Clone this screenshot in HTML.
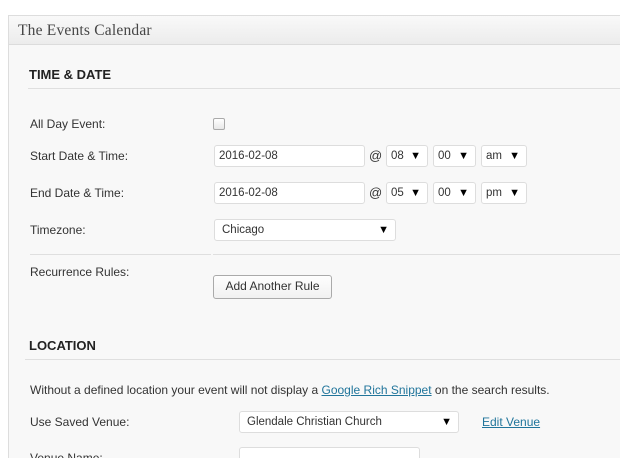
<!DOCTYPE html>
<html><head><style>
*{margin:0;padding:0;box-sizing:border-box}
html,body{width:620px;height:458px;overflow:hidden}
body{background:#fff;position:relative;font-family:"Liberation Sans",Arial,sans-serif;font-size:12px;color:#333}
.a{position:absolute}
#panel{left:8px;top:15px;width:620px;height:450px;border:1px solid #ddd;background:#f8f8f8}
#hdr{left:9px;top:16px;width:620px;height:29px;background:linear-gradient(#f9f9f9,#ececec);border-bottom:1px solid #dcdcdc}
.t{font-family:"Liberation Serif",Georgia,serif;font-size:15.5px;color:#464646;left:18px;top:22px;letter-spacing:0.2px}
.h{font-weight:bold;font-size:13px;color:#222;left:29px}
.rule{height:1px;background:#dfdfdf}
.lbl{left:30px;font-size:12px;color:#333}
.box{background:#fff;border:1px solid #ddd;border-radius:3px;height:22px;font-size:11.5px;color:#333;padding:4px 0 0 4px;line-height:13px}
.arr{position:absolute;right:6px;top:4px;font-size:11px;color:#000}
.btn{background:linear-gradient(#fefefe,#f1f1f1);border:1px solid #aaa;border-radius:3px;font-size:12px;color:#333;text-align:center;line-height:21px}
a{color:#21759b;text-decoration:underline}
</style></head><body>
<div id="panel" class="a"></div>
<div id="hdr" class="a"></div>
<div class="a t">The Events Calendar</div>
<div class="a h" style="top:67px">TIME &amp; DATE</div>
<div class="a rule" style="left:28px;top:88px;width:600px"></div>

<div class="a lbl" style="top:117px">All Day Event:</div>
<div class="a" style="left:213px;top:118px;width:12px;height:12px;border:1px solid #aaa;border-radius:2px;background:linear-gradient(#fff,#e8e8e8)"></div>

<div class="a lbl" style="top:149px">Start Date &amp; Time:</div>
<div class="a box" style="left:214px;top:145px;width:151px">2016-02-08</div>
<div class="a" style="left:369px;top:148px;font-size:13px">@</div>
<div class="a box" style="left:386px;top:145px;width:42px">08<span class="arr">▼</span></div>
<div class="a box" style="left:433px;top:145px;width:43px">00<span class="arr">▼</span></div>
<div class="a box" style="left:481px;top:145px;width:46px">am<span class="arr">▼</span></div>

<div class="a lbl" style="top:186px">End Date &amp; Time:</div>
<div class="a box" style="left:214px;top:182px;width:151px">2016-02-08</div>
<div class="a" style="left:369px;top:185px;font-size:13px">@</div>
<div class="a box" style="left:386px;top:182px;width:42px">05<span class="arr">▼</span></div>
<div class="a box" style="left:433px;top:182px;width:43px">00<span class="arr">▼</span></div>
<div class="a box" style="left:481px;top:182px;width:46px">pm<span class="arr">▼</span></div>

<div class="a lbl" style="top:223px">Timezone:</div>
<div class="a box" style="left:214px;top:219px;width:182px;padding-left:7px">Chicago<span class="arr">▼</span></div>

<div class="a rule" style="left:30px;top:254px;width:181px"></div>
<div class="a rule" style="left:213px;top:254px;width:420px"></div>
<div class="a lbl" style="top:265px">Recurrence Rules:</div>
<div class="a btn" style="left:213px;top:275px;width:119px;height:24px">Add Another Rule</div>

<div class="a h" style="top:338px">LOCATION</div>
<div class="a rule" style="left:25px;top:359px;width:600px"></div>
<div class="a lbl" style="top:383px">Without a defined location your event will not display a <a>Google Rich Snippet</a> on the search results.</div>
<div class="a lbl" style="top:415px">Use Saved Venue:</div>
<div class="a box" style="left:239px;top:411px;width:220px;padding-left:7px">Glendale Christian Church<span class="arr">▼</span></div>
<div class="a" style="left:482px;top:415px;font-size:12px"><a>Edit Venue</a></div>
<div class="a lbl" style="top:451px">Venue Name:</div>
<div class="a box" style="left:239px;top:447px;width:181px"></div>
</body></html>
